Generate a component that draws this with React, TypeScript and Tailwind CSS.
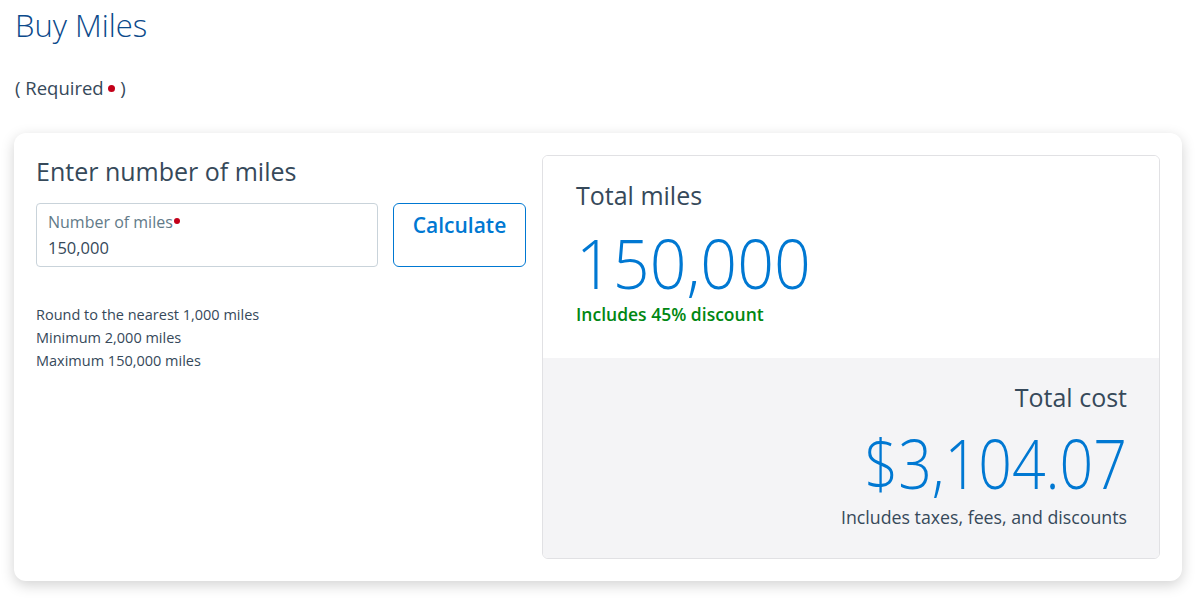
import React from "react";

export default function App() {
  return (
    <div className="min-h-[603px] bg-white pl-[14px] pr-[18px] pt-[3px] text-[#36495a]" style={{ fontFamily: '"Open Sans", "Noto Sans", sans-serif' }}>
      <h1 className="pl-px text-[31px] font-light leading-[44px] text-[#0b4a8b]">Buy Miles</h1>
      <p className="mt-[28px] pl-px text-[18.5px] leading-[26px]">
        ( Required <span className="relative -top-[2px] inline-block h-[7px] w-[7px] rounded-full bg-[#c30019] align-middle"></span> )
      </p>
      <div className="mt-[32px] flex gap-4 rounded-[12px] bg-white p-[22px] shadow-[0_4px_14px_rgba(0,0,0,0.18)]">
        <div className="w-[490px] shrink-0">
          <h2 className="text-[25px] leading-[32px]">Enter number of miles</h2>
          <div className="mt-4 flex gap-[15px]">
            <div className="h-[64px] w-[342px] rounded-[4px] border border-[#c9d3da] px-[11px] pt-[8px]">
              <div className="flex items-start text-[16px] leading-[20px] text-[#627a88]">
                Number of miles<span className="ml-px mt-[6px] inline-block h-[6px] w-[6px] rounded-full bg-[#c30019]"></span>
              </div>
              <div className="mt-[5px] text-[16.5px] leading-[22px]">150,000</div>
            </div>
            <button className="h-[64px] w-[133px] rounded-[6px] border border-[#0078d2] pb-[18px] text-[21px] font-semibold text-[#0078d2]">
              Calculate
            </button>
          </div>
          <div className="mt-[36px] text-[14.5px] leading-[23px]">
            <p>Round to the nearest 1,000 miles</p>
            <p>Minimum 2,000 miles</p>
            <p>Maximum 150,000 miles</p>
          </div>
        </div>
        <div className="flex h-[404px] flex-1 flex-col overflow-hidden rounded-[6px] border border-[#e1e1e4]">
          <div className="h-[202px] shrink-0 bg-white px-[33px] pt-[22px]">
            <div className="text-[25px] leading-[34px]">Total miles</div>
            <div className="mt-[18px] origin-left scale-x-[0.935] text-[69px] font-light leading-[64px] text-[#0078d2]">150,000</div>
            <div className="mt-[8px] text-[17.5px] font-semibold leading-[24px] text-[#008712]">Includes 45% discount</div>
          </div>
          <div className="flex flex-1 flex-col items-end bg-[#f4f4f6] px-[32px] pt-[22px]">
            <div className="text-[25px] leading-[34px]">Total cost</div>
            <div className="mt-[16px] origin-right scale-x-[0.855] text-[69px] font-light leading-[64px] text-[#0078d2]">$3,104.07</div>
            <div className="mt-[11px] text-[17.75px] leading-[24px]">Includes taxes, fees, and discounts</div>
          </div>
        </div>
      </div>
    </div>
  );
}
